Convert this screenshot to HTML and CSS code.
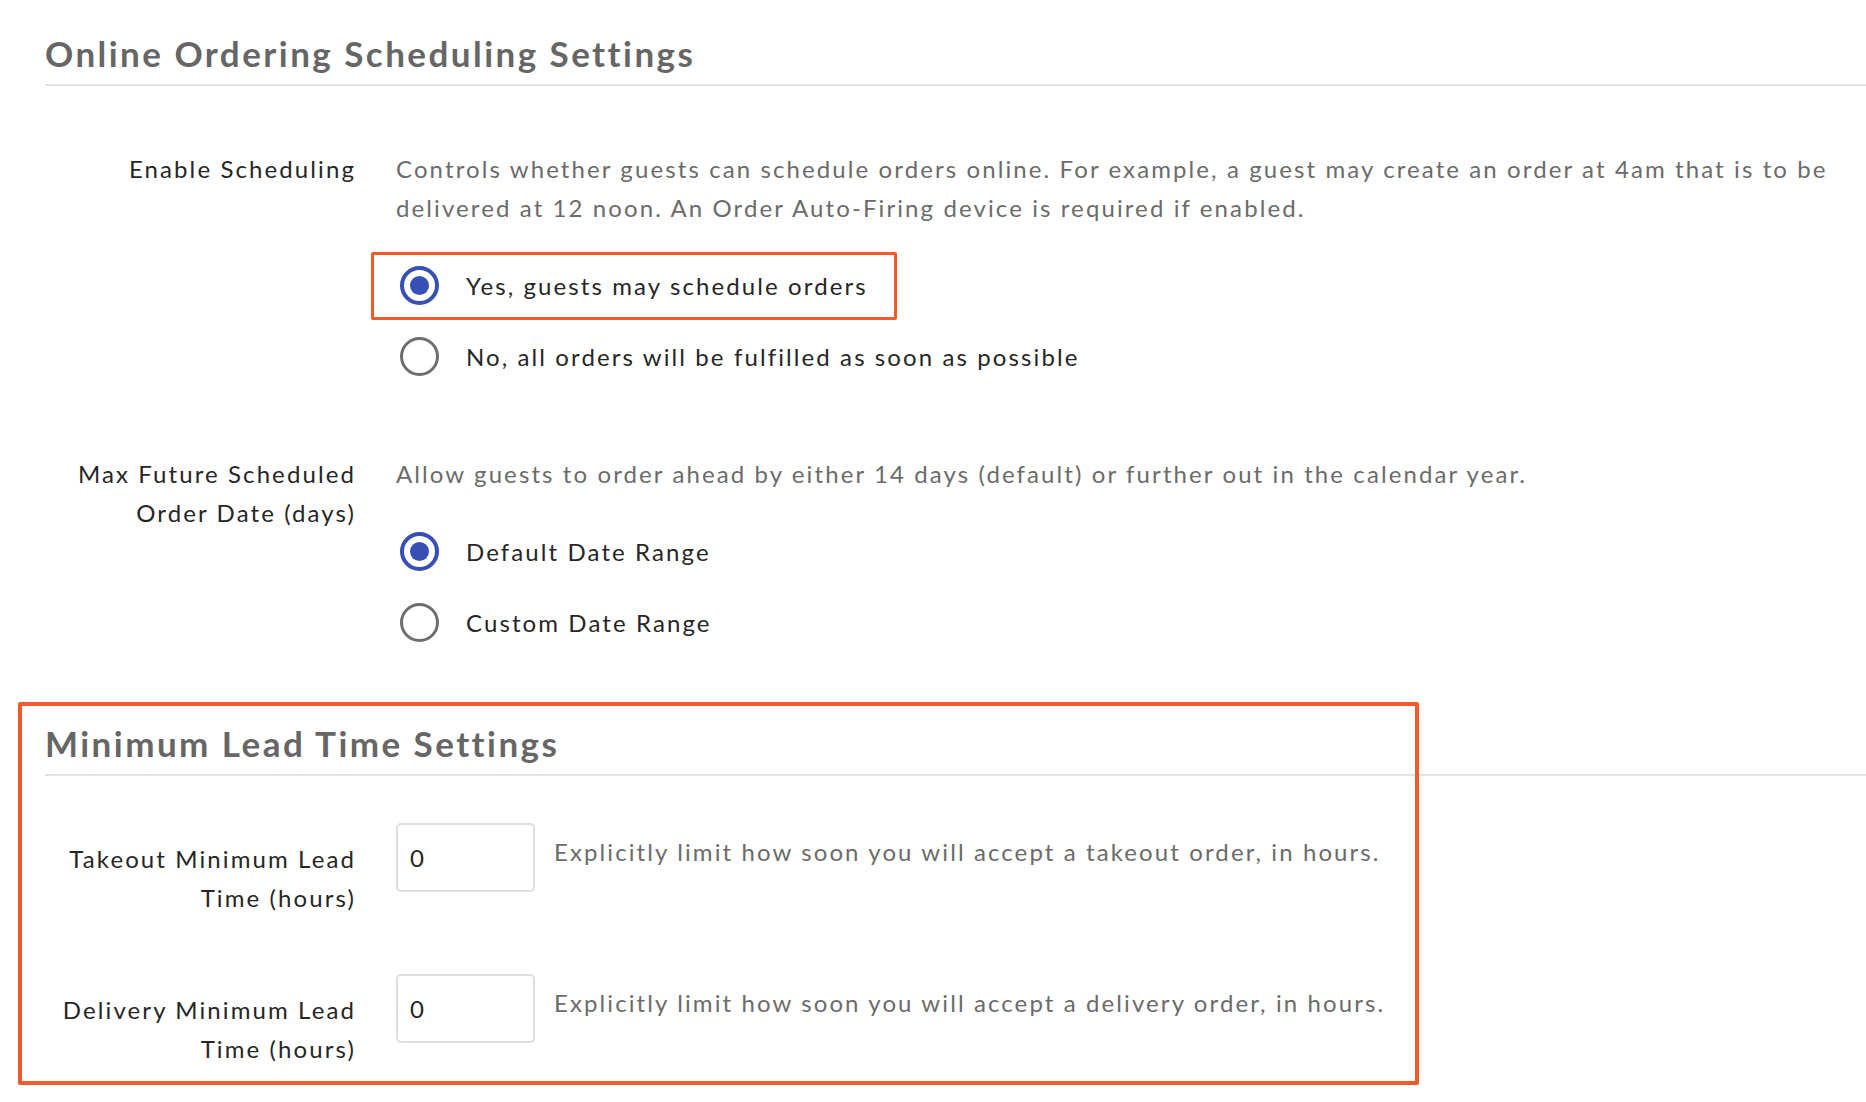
FILE: index.html
```html
<!DOCTYPE html>
<html lang="en">
<head>
<meta charset="utf-8">
<title>Online Ordering Scheduling Settings</title>
<link rel="stylesheet" href="styles.css">
</head>
<body>
<main class="page">
  <section class="section section-scheduling">
    <h2 class="section-title">Online Ordering Scheduling Settings</h2>

    <div class="form-row form-row-first">
      <div class="field-label">Enable Scheduling</div>
      <div class="field-body">
        <p class="field-help">Controls whether guests can schedule orders online. For example, a guest may create an order at 4am that is to be delivered at 12 noon. An Order Auto-Firing device is required if enabled.</p>
        <div class="radio-group">
          <label class="radio-option annotated">
            <span class="radio radio-checked"></span>
            <span class="radio-text">Yes, guests may schedule orders</span>
          </label>
          <label class="radio-option">
            <span class="radio"></span>
            <span class="radio-text">No, all orders will be fulfilled as soon as possible</span>
          </label>
        </div>
      </div>
    </div>

    <div class="form-row form-row-second">
      <div class="field-label">Max Future Scheduled Order Date (days)</div>
      <div class="field-body">
        <p class="field-help">Allow guests to order ahead by either 14 days (default) or further out in the calendar year.</p>
        <div class="radio-group">
          <label class="radio-option">
            <span class="radio radio-checked"></span>
            <span class="radio-text">Default Date Range</span>
          </label>
          <label class="radio-option">
            <span class="radio"></span>
            <span class="radio-text">Custom Date Range</span>
          </label>
        </div>
      </div>
    </div>
  </section>

  <section class="section section-lead">
    <div class="annotation-box"></div>
    <h2 class="section-title">Minimum Lead Time Settings</h2>

    <div class="lead-row lead-row-first">
      <div class="field-label lead-label">Takeout Minimum Lead Time (hours)</div>
      <div class="text-input"><span class="input-value">0</span></div>
      <p class="field-help lead-help">Explicitly limit how soon you will accept a takeout order, in hours.</p>
    </div>

    <div class="lead-row">
      <div class="field-label lead-label">Delivery Minimum Lead Time (hours)</div>
      <div class="text-input"><span class="input-value">0</span></div>
      <p class="field-help lead-help">Explicitly limit how soon you will accept a delivery order, in hours.</p>
    </div>
  </section>
</main>
</body>
</html>
```

FILE: styles.css
```css
* {
  box-sizing: border-box;
}

html, body {
  margin: 0;
  padding: 0;
  background: #ffffff;
}

body {
  font-family: "Lato", "Noto Sans", sans-serif;
  color: #262626;
  font-size: 24px;
  line-height: 39px;
  letter-spacing: 2.1px;
  min-height: 1102px;
}

.page {
  padding: 31px 0 40px 45px;
}

.section {
  position: relative;
}

.section-title {
  margin: 0;
  font-size: 35px;
  line-height: 44px;
  font-weight: 700;
  letter-spacing: 2.45px;
  color: #666666;
  padding-bottom: 9px;
  border-bottom: 2px solid #e2e2e2;
}

.form-row {
  display: grid;
  grid-template-columns: 311px 1fr;
  column-gap: 40px;
}

.form-row-first {
  margin-top: 63px;
}

.form-row-second {
  margin-top: 78px;
}

.field-label {
  text-align: right;
  color: #262626;
}

.field-body {
  padding-right: 8px;
}

.field-help {
  margin: 0;
  color: #6b6b6b;
}

.radio-group {
  display: flex;
  flex-direction: column;
  align-items: flex-start;
  gap: 32px;
  margin-top: 39px;
}

.radio-option {
  position: relative;
  display: inline-flex;
  align-items: center;
  height: 39px;
  padding-left: 4px;
  gap: 27px;
  color: #262626;
}

.radio {
  width: 39px;
  height: 39px;
  border-radius: 50%;
  border: 3px solid #6e6e6e;
  display: flex;
  align-items: center;
  justify-content: center;
  flex: none;
}

.radio-checked {
  border: 4px solid #3650b6;
}

.radio-checked::after {
  content: "";
  width: 19px;
  height: 19px;
  border-radius: 50%;
  background: #3650b6;
}

.annotated::after {
  content: "";
  position: absolute;
  left: -25px;
  right: -29px;
  top: -14px;
  bottom: -15px;
  border: 3px solid #f05a28;
  border-radius: 2px;
  pointer-events: none;
}

.section-lead {
  margin-top: 79px;
}

.annotation-box {
  position: absolute;
  left: -27px;
  top: -19px;
  width: 1401px;
  height: 383px;
  border: 4px solid #f05a28;
  border-radius: 2px;
  pointer-events: none;
}

.lead-row {
  display: grid;
  grid-template-columns: 311px 139px 1fr;
  column-gap: 40px;
  align-items: start;
  margin-top: 57px;
}

.lead-row-first {
  margin-top: 47px;
}

.lead-label {
  padding-top: 16px;
}

.text-input {
  height: 69px;
  border: 2px solid #dedede;
  border-radius: 5px;
  padding-left: 12px;
  display: flex;
  align-items: center;
  color: #262626;
  background: #ffffff;
}

.lead-help {
  margin-left: -21px;
  padding-top: 9px;
}
```
